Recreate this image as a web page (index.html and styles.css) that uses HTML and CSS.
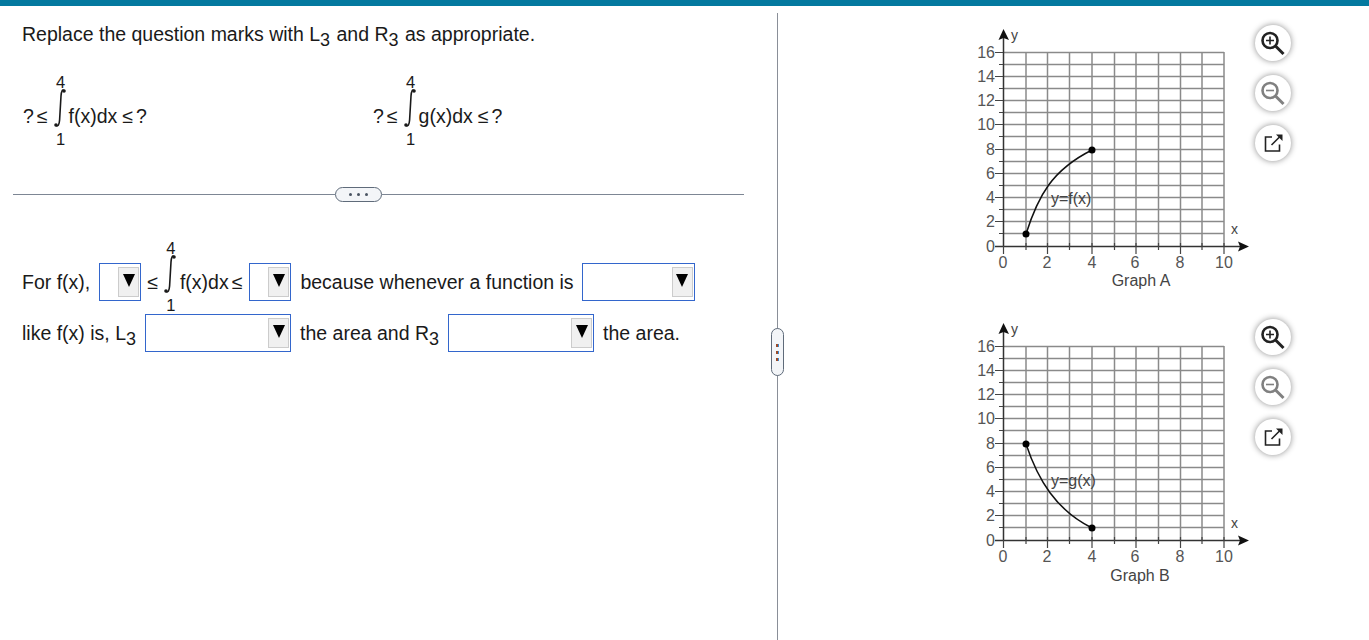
FILE: index.html
```html
<!DOCTYPE html>
<html>
<head>
<meta charset="utf-8">
<title>Riemann sums</title>
<link rel="stylesheet" href="styles.css">
</head>
<body>
<svg class="sprite" aria-hidden="true">
  <symbol id="intSign" viewBox="1 0 14 40">
    <path d="M11.2 2.6C9.4 1.2 8.4 3 8 8L6.6 32C6.2 37 5 38.8 2.8 37.4" fill="none" stroke="#1a1a1a" stroke-width="1.6"/>
    <circle cx="11" cy="3" r="1.8" fill="#1a1a1a"/>
    <circle cx="3" cy="37" r="1.8" fill="#1a1a1a"/>
  </symbol>
  <symbol id="zoomIn" viewBox="0 0 36 36">
    <circle cx="15" cy="15.500" r="7.500" fill="none" stroke="#222" stroke-width="2.600"/>
    <path d="M20.500 21L28.500 29" stroke="#222" stroke-width="3"/>
    <path d="M11 15.500H19M15 11.500V19.500" stroke="#222" stroke-width="1.600"/>
  </symbol>
  <symbol id="zoomOut" viewBox="0 0 36 36">
    <circle cx="15" cy="15.500" r="7.500" fill="none" stroke="#808080" stroke-width="2.600"/>
    <path d="M20.500 21L28.500 29" stroke="#808080" stroke-width="3"/>
    <path d="M11 15.500H19" stroke="#808080" stroke-width="1.600"/>
  </symbol>
  <symbol id="popOut" viewBox="0 0 36 36">
    <path d="M17 12H10.500V26H24.500V19.500" fill="none" stroke="#222" stroke-width="1.600"/>
    <path d="M16.500 20L25.500 11" stroke="#222" stroke-width="1.600"/>
    <path d="M21 9.500H27.500V16Z" fill="#222"/>
  </symbol>
  <symbol id="grid" viewBox="975 25 280 270">
    <path class="gridline" d="M1026 52V246M1047.500 52V246M1069.500 52V246M1092 52V246M1114.500 52V246M1136 52V246M1158.500 52V246M1180.500 52V246M1202 52V246M1224 52V246"/>
    <path class="gridline" d="M1003 52.500H1224M1003 64.500H1224M1003 76.500H1224M1003 88.500H1224M1003 100.500H1224M1003 112.500H1224M1003 124.500H1224M1003 136.500H1224M1003 149.500H1224M1003 161.500H1224M1003 173.500H1224M1003 185.500H1224M1003 197.500H1224M1003 209.500H1224M1003 221.500H1224M1003 233.500H1224"/>
    <path class="axis" d="M1003.500 246V36M995 246.500H1242"/>
    <path class="tick" d="M995 52.500H1003M999 64.500H1003M995 76.500H1003M999 88.500H1003M995 100.500H1003M999 112.500H1003M995 124.500H1003M999 136.500H1003M995 149.500H1003M999 161.500H1003M995 173.500H1003M999 185.500H1003M995 197.500H1003M999 209.500H1003M995 221.500H1003M999 233.500H1003"/>
    <path class="tick" d="M1003.500 246V254M1026 243V250M1047.500 243V254M1069.500 243V250M1092 243V254M1114.500 243V250M1136 243V254M1158.500 243V250M1180.500 243V254M1202 243V250M1224 243V254"/>
    <path class="arrow" d="M1003.500 29L1009 40L1003.500 38L998.500 40Z"/>
    <path class="arrow" d="M1249 246.500L1238 241.500L1240 246.500L1238 251.500Z"/>
  </symbol>
</svg>

<div class="topbar"></div>
<div class="main">
  <div class="question">
    <div class="prompt">Replace the question marks with L<sub>3</sub> and R<sub>3</sub> as appropriate.</div>

    <div class="compare">
      <div class="math compare-f">
        <span>?</span><span>≤</span>
        <span class="integral"><i>4</i><svg class="int-sign"><use href="#intSign"/></svg><i class="lower">1</i></span>
        <span class="integrand">f(x)dx</span><span>≤</span><span>?</span>
      </div>
      <div class="math">
        <span>?</span><span>≤</span>
        <span class="integral"><i>4</i><svg class="int-sign"><use href="#intSign"/></svg><i class="lower">1</i></span>
        <span class="integrand">g(x)dx</span><span>≤</span><span>?</span>
      </div>
    </div>

    <div class="separator">
      <div class="sep-line sep-left"></div>
      <div class="pill"><b></b><b></b><b></b></div>
      <div class="sep-line"></div>
    </div>

    <div class="answer answer-first">
      <span>For f(x),</span>
      <span class="dropdown dd-small"><span class="dd-btn"></span></span>
      <div class="math math-inline">
        <span>≤</span>
        <span class="integral"><i>4</i><svg class="int-sign"><use href="#intSign"/></svg><i class="lower">1</i></span>
        <span class="integrand">f(x)dx</span><span>≤</span>
      </div>
      <span class="dropdown dd-small"><span class="dd-btn"></span></span>
      <span>because whenever a function is</span>
      <span class="dropdown dd-mid"><span class="dd-btn"></span></span>
    </div>
    <div class="answer">
      <span>like f(x) is, L<sub>3</sub></span>
      <span class="dropdown dd-wide"><span class="dd-btn"></span></span>
      <span>the area and R<sub>3</sub></span>
      <span class="dropdown dd-wide"><span class="dd-btn"></span></span>
      <span>the area.</span>
    </div>
  </div>

  <div class="figures">
    <div class="handle"><b></b><b></b><b></b></div>

    <div class="graph-row">
      <svg class="graph" viewBox="975 25 280 270">
        <use href="#grid" x="975" y="25" width="280" height="270"/>
        <g class="num num-y">
          <text x="995" y="58">16</text><text x="995" y="82">14</text><text x="995" y="106">12</text><text x="995" y="130">10</text>
          <text x="995" y="155">8</text><text x="995" y="179">6</text><text x="995" y="203">4</text><text x="995" y="227">2</text><text x="995" y="252">0</text>
        </g>
        <g class="num num-x">
          <text x="1003" y="268">0</text><text x="1047" y="268">2</text><text x="1092" y="268">4</text><text x="1135" y="268">6</text><text x="1180" y="268">8</text><text x="1224" y="268">10</text>
        </g>
        <text class="axis-name" x="1011" y="40">y</text>
        <text class="axis-name" x="1231" y="234">x</text>
        <path class="curve" d="M1026 234C1038 196 1052 170 1092 150"/>
        <circle cx="1026" cy="234" r="3.500"/>
        <circle cx="1092" cy="150" r="3.500"/>
        <text class="curve-name" x="1051" y="204">y=f(x)</text>
        <text class="graph-name" x="1141" y="286">Graph A</text>
      </svg>
      <div class="tools">
        <button class="tool"><svg><use href="#zoomIn"/></svg></button>
        <button class="tool"><svg><use href="#zoomOut"/></svg></button>
        <button class="tool"><svg><use href="#popOut"/></svg></button>
      </div>
    </div>

    <div class="graph-row">
      <svg class="graph" viewBox="975 25 280 270">
        <use href="#grid" x="975" y="25" width="280" height="270"/>
        <g class="num num-y">
          <text x="995" y="58">16</text><text x="995" y="82">14</text><text x="995" y="106">12</text><text x="995" y="130">10</text>
          <text x="995" y="155">8</text><text x="995" y="179">6</text><text x="995" y="203">4</text><text x="995" y="227">2</text><text x="995" y="252">0</text>
        </g>
        <g class="num num-x">
          <text x="1003" y="268">0</text><text x="1047" y="268">2</text><text x="1092" y="268">4</text><text x="1135" y="268">6</text><text x="1180" y="268">8</text><text x="1224" y="268">10</text>
        </g>
        <text class="axis-name" x="1011" y="40">y</text>
        <text class="axis-name" x="1231" y="234">x</text>
        <path class="curve" d="M1026 150C1038 186 1056 216 1092 234"/>
        <circle cx="1026" cy="150" r="3.500"/>
        <circle cx="1092" cy="234" r="3.500"/>
        <text class="curve-name" x="1051" y="192">y=g(x)</text>
        <text class="graph-name" x="1140" y="287">Graph B</text>
      </svg>
      <div class="tools">
        <button class="tool"><svg><use href="#zoomIn"/></svg></button>
        <button class="tool"><svg><use href="#zoomOut"/></svg></button>
        <button class="tool"><svg><use href="#popOut"/></svg></button>
      </div>
    </div>
  </div>
</div>
</body>
</html>
```
FILE: styles.css
```css
html, body {
  margin: 0;
  height: 640px;
  overflow: hidden;
  background: white;
}
body {
  font-family: "Liberation Sans", Arial, sans-serif;
  font-size: 19.5px;
  color: #1a1a1a;
}
.sprite {
  position: absolute;
  width: 0;
  height: 0;
}
.topbar {
  height: 6px;
  background-color: #04799f;
}
.main {
  display: flex;
  margin-top: 7px;
  height: 627px;
}

/* left side */
.question {
  width: 777px;
  flex: none;
  box-sizing: border-box;
  padding: 8px 33px 0 13px;
}
.prompt {
  padding-left: 9px;
  line-height: 26px;
  white-space: nowrap;
}
.prompt sub {
  margin-right: 1px;
}
sub {
  font-size: 18px;
  line-height: 0;
  vertical-align: -5px;
}
.compare {
  display: flex;
  margin-top: 38px;
  padding-left: 10px;
}
.compare-f {
  width: 350px;
}
.compare .integral {
  margin-right: -2px;
}
.compare .integrand {
  margin-right: 2px;
}
.math {
  display: flex;
  align-items: center;
  gap: 3px;
  height: 62px;
  white-space: nowrap;
}
.integral {
  display: flex;
  flex-direction: column;
  align-items: center;
  width: 14px;
  height: 74px;
  margin: -12px -1px 0 3px;
  font-size: 16.500px;
  line-height: 14px;
}
.integral i {
  font-style: normal;
  margin: 2px 0 -2px;
}
.integral .lower {
  margin: 4px 0 0;
}
.int-sign {
  display: block;
  flex: none;
  width: 14px;
  height: 40px;
  margin-top: 1px;
}
.separator {
  display: flex;
  align-items: center;
  margin-top: 39px;
  height: 16px;
}
.sep-line {
  flex: 1;
  height: 1px;
  background-color: #7d8694;
}
.sep-left {
  flex: none;
  width: 322px;
}
.pill {
  display: flex;
  justify-content: center;
  align-items: center;
  gap: 5px;
  box-sizing: border-box;
  width: 47px;
  height: 15px;
  border: 1px solid #5f6b7a;
  border-radius: 8px;
  background-color: #f3f5f8;
}
.pill b {
  width: 3px;
  height: 3px;
  border-radius: 50%;
  background-color: #4a5462;
}
.answer {
  display: flex;
  align-items: center;
  gap: 9px;
  padding-left: 9px;
  height: 38px;
  margin-top: 1px;
  white-space: nowrap;
}
.answer-first {
  height: 62px;
  margin-top: 49px;
}
.math-inline {
  margin-left: -3px;
  margin-right: -2px;
}
.dropdown {
  display: flex;
  flex: none;
  justify-content: flex-end;
  align-items: center;
  box-sizing: border-box;
  height: 38px;
  border: 1px solid #3366cc;
  padding-right: 1px;
}
.dd-small { width: 42px; }
.dd-mid { width: 113px; margin-left: -1px; }
.dd-wide { width: 146px; }
.dd-btn {
  display: flex;
  justify-content: center;
  align-items: center;
  box-sizing: border-box;
  width: 21px;
  height: 30px;
  border: 1px solid #cccccc;
  background-color: #f0f0f0;
}
.dd-btn::after {
  content: "";
  border-left: 6.5px solid transparent;
  border-right: 6.5px solid transparent;
  border-top: 13px solid black;
  margin-bottom: 4px;
}

/* right side */
.figures {
  position: relative;
  flex: 1;
  box-sizing: border-box;
  padding: 12px 0 0 197px;
  border-left: 1px solid #8a8f98;
}
.handle {
  position: absolute;
  left: -7px;
  top: 315px;
  display: flex;
  flex-direction: column;
  align-items: center;
  justify-content: center;
  gap: 4px;
  box-sizing: border-box;
  width: 13px;
  height: 48px;
  border: 1px solid #5f6b7a;
  border-radius: 7px;
  background-color: #f3f5f8;
}
.handle b {
  width: 3px;
  height: 3px;
  background: linear-gradient(to right, #9a4a2a 50%, #3a8ad0 50%);
}
.graph-row {
  display: flex;
  height: 294px;
}
.graph {
  display: block;
  flex: none;
  width: 280px;
  height: 270px;
}
.gridline {
  fill: none;
  stroke: #8a8a8a;
  stroke-width: 1.5;
}
.axis {
  fill: none;
  stroke: #333333;
  stroke-width: 1.5;
}
.tick {
  fill: none;
  stroke: #444444;
  stroke-width: 1.2;
}
.arrow {
  fill: #111111;
}
.num {
  font-size: 16px;
  fill: #555555;
}
.num-y {
  text-anchor: end;
}
.num-x {
  text-anchor: middle;
}
.axis-name {
  font-size: 14px;
  fill: #444444;
}
.curve {
  fill: none;
  stroke: #111111;
  stroke-width: 1.5;
}
.graph circle {
  fill: black;
}
.curve-name {
  font-size: 16px;
  fill: #444444;
}
.graph-name {
  font-size: 16px;
  fill: #444444;
  text-anchor: middle;
}
.tools {
  display: flex;
  flex-direction: column;
  gap: 14px;
}
.tool {
  display: block;
  width: 36px;
  height: 36px;
  padding: 0;
  border: none;
  border-radius: 50%;
  background: white;
  box-shadow: 0 0 6px rgba(0, 0, 0, 0.45);
}
.tool svg {
  display: block;
  width: 36px;
  height: 36px;
}
```
